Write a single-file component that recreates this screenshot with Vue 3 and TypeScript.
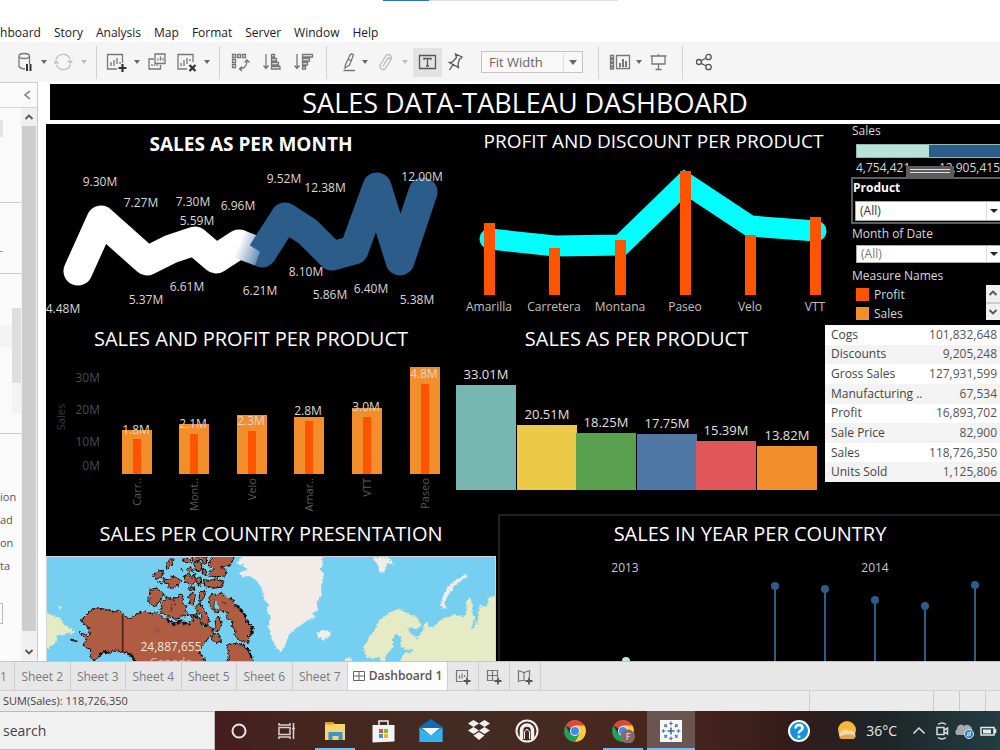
<script setup lang="ts">
import { ref } from 'vue'

interface Point { x: number; y: number }
interface Label extends Point { text: string }
interface ProductBar { name: string; x: number; top: number }
interface DualBar { name: string; x: number; sales: number; profit: number; label: string; labelY: number }
interface ColorBar { label: string; x: number; top: number; color: string }

const menus = ['Dashboard', 'Story', 'Analysis', 'Map', 'Format', 'Server', 'Window', 'Help']
const fit = ref('Fit Width')
const product = ref('(All)')
const month = ref('(All)')

const toPath = (pts: Point[]) => pts.map(p => `${p.x},${p.y}`).join(' ')

const firstYear: Point[] = [
  { x: 32, y: 109 }, { x: 55, y: 58 }, { x: 101, y: 99 }, { x: 125, y: 87 },
  { x: 149, y: 79 }, { x: 170, y: 97 }, { x: 193, y: 82 },
]
const secondYear: Point[] = [
  { x: 216, y: 91 }, { x: 239, y: 55 }, { x: 262, y: 70 }, { x: 286, y: 94 },
  { x: 308, y: 88 }, { x: 331, y: 25 }, { x: 354, y: 99 }, { x: 377, y: 30 },
]
const monthLabels: Label[] = [
  { x: 54, y: 24, text: '9.30M' }, { x: 95, y: 45, text: '7.27M' }, { x: 147, y: 44, text: '7.30M' },
  { x: 151, y: 63, text: '5.59M' }, { x: 192, y: 48, text: '6.96M' }, { x: 238, y: 21, text: '9.52M' },
  { x: 279, y: 30, text: '12.38M' }, { x: 376, y: 19, text: '12.00M' }, { x: 17, y: 151, text: '4.48M' },
  { x: 100, y: 142, text: '5.37M' }, { x: 141, y: 129, text: '6.61M' }, { x: 214, y: 133, text: '6.21M' },
  { x: 260, y: 114, text: '8.10M' }, { x: 284, y: 137, text: '5.86M' }, { x: 325, y: 131, text: '6.40M' },
  { x: 371, y: 142, text: '5.38M' },
]

const discountLine: Point[] = [
  { x: 34, y: 79 }, { x: 99, y: 86 }, { x: 165, y: 85 }, { x: 229, y: 23 }, { x: 294, y: 66 }, { x: 360, y: 71 },
]
const profitBars: ProductBar[] = [
  { name: 'Amarilla', x: 33, top: 63 }, { name: 'Carretera', x: 98, top: 88 }, { name: 'Montana', x: 164, top: 80 },
  { name: 'Paseo', x: 229, top: 11 }, { name: 'Velo', x: 294, top: 75 }, { name: 'VTT', x: 359, top: 57 },
]

const axis: Label[] = [
  { x: 54, y: 28, text: '30M' }, { x: 54, y: 60, text: '20M' }, { x: 54, y: 92, text: '10M' }, { x: 54, y: 116, text: '0M' },
]
const dualBars: DualBar[] = [
  { name: 'Carr..', x: 91, sales: 76, profit: 85, label: '1.8M', labelY: 80 },
  { name: 'Mont..', x: 148, sales: 70, profit: 80, label: '2.1M', labelY: 74 },
  { name: 'Velo', x: 206, sales: 61, profit: 77, label: '2.3M', labelY: 71 },
  { name: 'Amar..', x: 263, sales: 63, profit: 67, label: '2.8M', labelY: 61 },
  { name: 'VTT', x: 321, sales: 54, profit: 63, label: '3.0M', labelY: 57 },
  { name: 'Paseo', x: 379, sales: 13, profit: 30, label: '4.8M', labelY: 24 },
]

const colorBars: ColorBar[] = [
  { label: '33.01M', x: 0, top: 31, color: '#76b7b2' }, { label: '20.51M', x: 61, top: 71, color: '#edc948' },
  { label: '18.25M', x: 120, top: 79, color: '#59a14f' }, { label: '17.75M', x: 181, top: 80, color: '#4e79a7' },
  { label: '15.39M', x: 240, top: 87, color: '#e15759' }, { label: '13.82M', x: 301, top: 92, color: '#f28e2b' },
]

const totals: [string, string][] = [
  ['Cogs', '101,832,648'], ['Discounts', '9,205,248'], ['Gross Sales', '127,931,599'], ['Manufacturing ..', '67,534'],
  ['Profit', '16,893,702'], ['Sale Price', '82,900'], ['Sales', '118,726,350'], ['Units Sold', '1,125,806'],
]

const lollipops: Point[] = [
  { x: 275, y: 31 }, { x: 325, y: 34 }, { x: 375, y: 45 }, { x: 425, y: 51 }, { x: 475, y: 30 },
]
const sheets = ['Sheet 2', 'Sheet 3', 'Sheet 4', 'Sheet 5', 'Sheet 6', 'Sheet 7']
const burst = [0, 45, 90, 135, 180, 225, 270, 315]
</script>

<template>
  <div class="app">
    <div class="progress"><i></i></div>
    <nav class="menu">
      <button v-for="m in menus" :key="m" type="button">{{ m }}</button>
    </nav>

    <div class="toolbar">
      <div class="group lead">
        <button type="button" class="ic" aria-label="Pause auto updates">
          <svg viewBox="0 0 24 24"><path d="M7 6v10.500q2 2.500 6 2.500M17.500 6v8M7 6q0-2.500 5.200-2.500t5.200 2.500q0 2.500-5.200 2.500T7 6z" /><path class="solid" d="M14 14h2v7h-2zM17.500 14h2v7h-2z" /></svg>
        </button>
        <button type="button" class="caret" aria-label="Pause options"></button>
        <button type="button" class="ic dim" aria-label="Refresh">
          <svg viewBox="0 0 24 24"><path d="M4 9.500A7.500 7.500 0 0 1 18 9M18.500 14.500A7.500 7.500 0 0 1 4.500 15" /><path class="fill" d="M15 10.500h6L18.500 14zM1.500 13.500h6L4 10z" /></svg>
        </button>
        <button type="button" class="caret dim" aria-label="Refresh options"></button>
      </div>
      <div class="group">
        <button type="button" class="ic" aria-label="New worksheet">
          <svg viewBox="0 0 24 24"><path d="M12 19H2.500V4.500h15V13M6 12v4M9 10v6M12 8v6M15 12v2" /><path class="dark" d="M17.500 14v8M13.500 18h8" /></svg>
        </button>
        <button type="button" class="caret" aria-label="New options"></button>
        <button type="button" class="ic" aria-label="Duplicate">
          <svg viewBox="0 0 24 24"><path d="M10 4h10v9.500H10zM9 9H4v10h11.500v-4M13 10.500v-2M15.500 10.500v-4M18 10.500V8M7 16v-2M9.500 16v-1.500M12 16v-1.500" /></svg>
        </button>
        <button type="button" class="ic step" aria-label="Clear sheet">
          <svg viewBox="0 0 24 24"><path d="M12 19H3V4.500h15V12M6 13v3M9 10v6M12 8v6M15 9v2" /><path class="dark" d="M14.500 15l6 6M20.500 15l-6 6" /></svg>
        </button>
        <button type="button" class="caret" aria-label="Clear options"></button>
      </div>
      <div class="group wide">
        <button type="button" class="ic" aria-label="Swap rows and columns">
          <svg viewBox="0 0 24 24"><path d="M4.500 4.500h3v3h-3zM9.500 4.500h3v3h-3zM14.500 4.500h3v3h-3zM4.500 9.500h3v3h-3zM4.500 14.500h3v3h-3zM19 10.500q0 7.500-7 8.500M16.500 12.500L19 10l2.500 2.500M14 16.500L11.500 19l2.500 2" /></svg>
        </button>
        <button type="button" class="ic" aria-label="Sort ascending">
          <svg viewBox="0 0 24 24"><path d="M6 4v14M3.500 15.500L6 18.500l2.500-3M11.500 4.500h3V7h-3zM11.500 8.500h5V11h-5zM11.500 12.500h7V15h-7zM11.500 16.500h8.500V19h-8.500z" /></svg>
        </button>
        <button type="button" class="ic" aria-label="Sort descending">
          <svg viewBox="0 0 24 24"><path d="M5 4v14M2.500 15.500L5 18.500l2.500-3M10.500 4.500h10V7h-10zM10.500 8.500h7V11h-7zM10.500 12.500h5V15h-5zM10.500 16.500h3V19h-3z" /></svg>
        </button>
      </div>
      <div class="group marks">
        <button type="button" class="ic" aria-label="Highlight">
          <svg viewBox="0 0 24 24"><path d="M12.500 14.500L17 5q1.500-2 3.500 0L16.500 15l-4.500 3zM15 9l4 2M10.500 20.500H22" /></svg>
        </button>
        <button type="button" class="caret" aria-label="Highlight options"></button>
        <button type="button" class="ic dim" aria-label="Group members">
          <svg viewBox="0 0 24 24"><path d="M10 16.500l4.500-8q1.500-1.500 2.500 0t0 2.500l-4.500 7.500q-2.500 2-4.500 0t-.5-4l5.500-9q2.500-2 4.500 0t0 4.500l-3 5" /></svg>
        </button>
        <button type="button" class="caret dim" aria-label="Group options"></button>
        <button type="button" class="ic active" aria-label="Show mark labels">
          <svg viewBox="0 0 24 24"><path class="dk" d="M3.500 5.500h16v13h-16zM8 10V8.500h7V10M11.500 8.500v7.500M10 16h3" /></svg>
        </button>
        <button type="button" class="ic" aria-label="Fix axes">
          <svg viewBox="0 0 24 24"><path class="dk" d="M11.500 4l6.500 3-1 1.500-1.500.5-1.500 5 .5 3.500L5.500 12.500l3-.5 4-4.500zM9 14.500L5.500 20" /></svg>
        </button>
        <label class="fit">
          <select v-model="fit" aria-label="Fit"><option>Fit Width</option><option>Standard</option></select>
          <i></i>
        </label>
      </div>
      <div class="group show">
        <button type="button" class="ic" aria-label="Show cards">
          <svg viewBox="0 0 24 24"><path d="M2.500 5.500h3V8h-3zM2.500 9.500h3V12h-3zM2.500 13.500h3V16h-3zM2.500 17h3v2h-3zM8.500 5.500h13v13h-13z" /><path d="M12 17v-4M15 17V9M18 17v-6" stroke-width="2" /></svg>
        </button>
        <button type="button" class="caret" aria-label="Card options"></button>
        <button type="button" class="ic" aria-label="Presentation mode">
          <svg viewBox="0 0 24 24"><path d="M4.500 6h16M6 6v8h13V6M12.500 4v2M12.500 14v5.500M9.500 19.500h6" /></svg>
        </button>
      </div>
      <div class="group last">
        <button type="button" class="ic" aria-label="Share">
          <svg viewBox="0 0 24 24"><path class="dk" d="M8.500 10.800l6-2.800M8.500 13.200l6 2.800" /><circle class="dk" cx="7" cy="12" r="2.500" /><circle class="dk" cx="16.500" cy="7" r="2.700" /><circle class="dk" cx="16.500" cy="17" r="2.700" /></svg>
        </button>
      </div>
    </div>

    <div class="work">
      <aside class="pane">
        <header><button type="button" aria-label="Collapse"><svg viewBox="0 0 8 10"><path d="M7 1L2 5l5 4" /></svg></button></header>
        <div class="pane-body">
          <div class="pane-items">
            <section class="s1"><i></i></section>
            <section class="s2"><i></i></section>
            <section class="s3"><div class="row"></div><div class="mini"><i></i></div></section>
            <section class="s4"><span>ion</span><span>ad</span><span>on</span><span>ta</span><i></i></section>
          </div>
          <div class="scroll">
            <svg viewBox="0 0 10 8"><path d="M1.500 6L5 2.500 8.500 6" /></svg>
            <i></i>
            <svg viewBox="0 0 10 8"><path d="M1.500 2L5 5.500 8.500 2" /></svg>
          </div>
        </div>
      </aside>

      <main class="dash">
        <h1>SALES DATA-TABLEAU DASHBOARD</h1>
        <div class="board">
          <div class="row-top">
            <section class="month">
              <h2>SALES AS PER MONTH</h2>
              <svg class="chart" viewBox="0 0 410 162" preserveAspectRatio="xMidYMin meet">
                <defs>
                  <linearGradient id="fade" gradientUnits="userSpaceOnUse" x1="193" y1="82" x2="216" y2="91">
                    <stop offset="0" stop-color="#fff" /><stop offset="1" stop-color="#5f85b0" />
                  </linearGradient>
                </defs>
                <g fill="none" stroke-width="29" stroke-linejoin="round">
                  <polyline :points="toPath(firstYear)" stroke="#fff" stroke-linecap="round" />
                  <circle cx="216" cy="91" r="14.500" fill="#2b5c8a" stroke="none" />
                  <path d="M193 82L214 90" stroke="url(#fade)" />
                  <polyline :points="toPath(secondYear)" stroke="#2b5c8a" />
                  <circle cx="377" cy="30" r="14.500" fill="#2b5c8a" stroke="none" />
                </g>
                <text v-for="l in monthLabels" :key="l.text" class="val mid" :x="l.x" :y="l.y">{{ l.text }}</text>
              </svg>
            </section>
            <section class="profit">
              <h2>PROFIT AND DISCOUNT PER PRODUCT</h2>
              <svg class="chart" viewBox="0 0 395 164" preserveAspectRatio="xMidYMin meet">
                <polyline :points="toPath(discountLine)" fill="none" stroke="#0ff" stroke-width="21" stroke-linecap="round" />
                <g v-for="b in profitBars" :key="b.name">
                  <rect :x="b.x - 5" :y="b.top" width="11" :height="135 - b.top" fill="#ff5500" />
                  <text class="cat mid" :x="b.x" y="151">{{ b.name }}</text>
                </g>
              </svg>
            </section>
            <section class="filters">
              <div class="flabel first">Sales</div>
              <div class="ramp"><i></i><i></i></div>
              <div class="range"><span>4,754,421</span><span>12,905,415</span><b class="grip"></b></div>
              <div class="picked">
                <label for="product">Product</label>
                <div class="pick"><select id="product" v-model="product"><option>(All)</option></select><i></i></div>
              </div>
              <div class="plain">
                <label class="flabel" for="month">Month of Date</label>
                <div class="pick soft"><select id="month" v-model="month"><option>(All)</option></select><i></i></div>
              </div>
              <div class="flabel names">Measure Names</div>
              <div class="legend">
                <ul><li><i class="p"></i>Profit</li><li><i class="s"></i>Sales</li></ul>
                <div class="spin">
                  <button type="button" aria-label="Scroll up"><svg viewBox="0 0 10 8"><path d="M1.500 6L5 2.500 8.500 6" /></svg></button>
                  <button type="button" aria-label="Scroll down"><svg viewBox="0 0 10 8"><path d="M1.500 2L5 5.500 8.500 2" /></svg></button>
                </div>
              </div>
            </section>
          </div>

          <div class="row-mid">
            <section class="dual">
              <h2>SALES AND PROFIT PER PRODUCT</h2>
              <svg class="chart" viewBox="0 0 410 159" preserveAspectRatio="xMidYMin meet">
                <text v-for="a in axis" :key="a.text" class="axis" :x="a.x" :y="a.y">{{ a.text }}</text>
                <text class="axis-name mid" transform="translate(19 63) rotate(-90)">Sales</text>
                <g v-for="b in dualBars" :key="b.name">
                  <rect :x="b.x - 15" :y="b.sales" width="30" :height="120 - b.sales" fill="#f28e2b" />
                  <rect :x="b.x - 4" :y="b.profit" width="8" :height="120 - b.profit" fill="#ff5500" />
                  <text class="val mid" :x="b.x - 1" :y="b.labelY">{{ b.label }}</text>
                  <text class="side" :transform="`translate(${b.x + 4} 124) rotate(-90)`">{{ b.name }}</text>
                </g>
              </svg>
            </section>
            <section class="single">
              <h2>SALES AS PER PRODUCT</h2>
              <svg class="chart" viewBox="0 0 361 159" preserveAspectRatio="xMidYMin meet">
                <g v-for="b in colorBars" :key="b.label">
                  <rect :x="b.x" :y="b.top" width="60" :height="136 - b.top" :fill="b.color" />
                  <text class="big mid" :x="b.x + 30" :y="b.top - 6">{{ b.label }}</text>
                </g>
              </svg>
            </section>
            <section class="totals">
              <table><tbody>
                <tr v-for="t in totals" :key="t[0]"><th scope="row">{{ t[0] }}</th><td>{{ t[1] }}</td></tr>
              </tbody></table>
            </section>
          </div>

          <div class="row-low">
            <section class="country">
              <h2>SALES PER COUNTRY PRESENTATION</h2>
              <svg class="map" viewBox="18 141 1350 312" preserveAspectRatio="xMidYMin slice">
                <defs>
                  <filter id="coast" x="-5%" y="-5%" width="110%" height="110%">
                    <feTurbulence type="fractalNoise" baseFrequency="0.15" numOctaves="2" seed="4" />
                    <feDisplacementMap in="SourceGraphic" scale="12" xChannelSelector="R" yChannelSelector="G" />
                  </filter>
                </defs>
                <rect x="18" y="141" width="1350" height="312" fill="#75cff0" />
                <g filter="url(#coast)">
                  <path fill="#f1ece8" d="M590 160L605 143 615 130H845L848 165 840 180 852 192 843 230 845 255 830 275 833 300 815 312 828 320 800 333 770 355 748 372 735 405 724 427 710 415 695 388 685 350 692 320 680 300 688 285 672 270 665 235 650 212 628 198 605 202 598 185 622 178 608 165zM1000 146L1020 138 1050 146 1062 165 1045 160 1038 170 1032 190 1018 185 1014 165zM1202 280L1210 255 1222 232 1245 212 1280 190 1282 200 1245 225 1228 250 1215 275 1220 295 1205 292z" />
                  <path fill="#f1ece8" d="M828 368L850 360 872 366 872 378 850 390 836 382z" />
                  <path fill="#e5ebc4" d="M10 306L35 315 60 325 75 345 102 362 98 372 80 370 70 378 52 376 45 400 25 415H10zM52 288l16 4-8 5z" />
                  <path fill="#e5ebc4" d="M970 410L985 385 1005 360 1015 335 1040 315 1062 300 1085 298 1105 312 1130 322 1145 345 1130 358 1105 350 1110 370 1130 380 1150 360 1150 345 1162 335 1165 350 1180 350 1210 325 1230 320 1245 312 1270 322 1280 305 1278 275 1290 262 1298 280 1295 310 1305 320 1312 345 1318 300 1320 285 1340 290 1345 265 1380 250V470H1075L1090 430 1115 425 1120 418 1095 420 1082 410 1085 385 1068 372 1055 390 1062 410 1045 425 1035 453 1025 458 1018 440 998 447 978 440zM918 445l15-4 3 14h-22z" />
                  <path fill="none" stroke="#75cff0" stroke-width="7" d="M1298 355L1305 325M1150 350L1130 385" />
                  <g fill="#b05c42" stroke="#120c0a" stroke-width="3">
                    <path d="M124 330L150 302 172 293 205 300 222 306 235 300 248 314 270 326 290 312 315 302 335 312 350 308 368 322 385 325 400 340 420 330 440 340 462 330 450 315 470 312 476 330 488 350 505 345 518 355 520 375 505 385 495 398 482 410 478 430 492 445 500 465H295L280 440 262 428 240 425 225 420 205 430 190 422 178 440 162 453 150 440 152 420 128 405 140 388 118 368 150 378 145 350 135 345z" />
                    <path d="M330 238L350 235 372 252 362 270 345 290 326 278zM362 280L380 268 375 258 395 268 415 262 420 252 430 256 425 280 440 288 436 300 446 316 425 318 410 328 385 320 358 305 366 295zM445 262L458 246 466 255 460 285 445 282 452 272zM478 245L498 243 490 268 478 275zM468 290L480 278 492 300 508 330 498 350 480 335 486 315 472 310z" />
                    <path d="M505 265L518 250 530 256 545 248 560 262 575 265 585 285 600 295 612 312 618 330 632 345 640 370 625 378 628 400 600 392 580 372 590 365 575 348 578 335 560 325 562 308 540 300 530 310 512 290zM515 360L528 350 525 330 535 318 545 345 535 365zM520 372l15-2 10 22-14 6-18-8zM560 405L590 400 612 410 630 430 645 465H560L568 440z" />
                    <path d="M338 200L352 184 370 180 368 196 350 208zM368 205L385 210 395 198 410 202 425 214 415 225 400 235 385 232 388 222 370 218zM378 160L392 146 402 148 396 165 380 178zM425 148L445 145 455 155 440 158zM432 200L448 190 455 205 462 192 468 215 455 225 436 215zM462 160L478 150 486 170 478 185 466 180zM512 148L530 135H585L572 165 545 172 560 180 555 198 530 200 505 198 512 182 525 175 505 168zM490 208L510 212 530 206 552 214 545 232 520 234 495 230zM470 205l12-4 4 20-14 4zM455 143l25-3-4 12-16 4zM484 143l14-3 2 20-10 4zM487 176l14 6-4 14-10-4zM440 178l14-8 4 12-12 4zM445 232l14-4 6 10-16 4zM422 172l6 10M352 214l20 10M462 188l6 8M478 225l8 8" />
                    <path d="M92 388l18 6M178 438q12-18 28-10M262 432q18 4 24 24" stroke-width="6" fill="none" />
                    <path d="M586 285L604 300 622 332 638 355 634 370M606 400L628 424 636 445M380 328L400 345 420 336 450 344M460 318L482 326" fill="none" stroke-width="7" stroke-dasharray="14 5" />
                  </g>
                  <path d="M392 282l4 24M525 268l-4 24q12 10 20 8M545 275l15 8M400 265l6 20" fill="#75cff0" stroke="#120c0a" stroke-width="2" />
                </g>
                <path d="M248 313V427" stroke="#47251c" stroke-width="5" />
                <path d="M340 352l20 14M338 368l22-12M350 348v22" stroke="#92554a" stroke-width="3" />
                <text class="map-text" x="393" y="424">24,887,655</text>
                <text class="map-text place" x="393" y="472">Canada</text>
              </svg>
            </section>
            <section class="year">
              <h2>SALES IN YEAR PER COUNTRY</h2>
              <svg class="chart" viewBox="0 0 500 106" preserveAspectRatio="xMidYMin slice">
                <text class="yr mid" x="125" y="17">2013</text>
                <text class="yr mid" x="375" y="17">2014</text>
                <circle cx="126" cy="106" r="4" fill="#bce4d8" />
                <g v-for="p in lollipops" :key="p.x" fill="#2b5c8a">
                  <rect :x="p.x - 1" :y="p.y" width="2" :height="106 - p.y" />
                  <circle :cx="p.x" :cy="p.y" r="4" />
                </g>
              </svg>
            </section>
          </div>
        </div>
      </main>
    </div>

    <div class="tabs">
      <button type="button" class="first">1</button>
      <div class="sheets"><button v-for="s in sheets" :key="s" type="button">{{ s }}</button></div>
      <button type="button" class="current">
        <svg viewBox="0 0 12 12"><path d="M.5 1.500h11v9H.5zM6 1.500v9M.5 6h11" /></svg>Dashboard 1
      </button>
      <button type="button" class="new" aria-label="New worksheet"><svg viewBox="0 0 16 16"><path d="M8 12.500H1.500v-11h11V8M4.500 9.500v-3M7 9.500v-5M9.500 8V6" /><path class="plus" d="M12 8.500v7M8.500 12h7" /></svg></button>
      <button type="button" class="new" aria-label="New dashboard"><svg viewBox="0 0 16 16"><path d="M8 11.500H1.500v-10h10V8M6.500 1.500v10M1.500 6.500h10" /><path class="plus" d="M12 8.500v7M8.500 12h7" /></svg></button>
      <button type="button" class="new" aria-label="New story"><svg viewBox="0 0 16 16"><path d="M8 11.500H4.500l-3 1v-11l4 1.500L7 4l1.500-1 4-1.500V8M7 4v7.500" /><path class="plus" d="M12 8.500v7M8.500 12h7" /></svg></button>
    </div>

    <div class="status">
      <span>SUM(Sales): 118,726,350</span>
      <i class="c1"></i><i class="c2"></i><i class="c3"></i><i class="c4"></i>
    </div>

    <footer class="taskbar">
      <input type="text" value="search" aria-label="Search" />
      <div class="apps">
        <button type="button" aria-label="Cortana"><svg viewBox="0 0 24 24"><circle cx="12" cy="12" r="6.500" fill="none" stroke="#e8e4e4" stroke-width="2" /></svg></button>
        <button type="button" aria-label="Task view"><svg viewBox="0 0 24 24"><path d="M4 4v2h11V4M4 20v-2h11v2M4 8.500h11v7H4zM18.500 4v16M17 9.500h3" fill="none" stroke="#d8d2d0" stroke-width="1.500" /></svg></button>
        <button type="button" class="open" aria-label="File Explorer"><svg viewBox="0 0 24 24"><path d="M2 3h8l1.500 2H22v16H2z" fill="#f9d56b" /><path d="M2 3h8l1 2.500H2z" fill="#e49b1c" /><path d="M5.500 21v-8h14v8h-4v-4h-6v4z" fill="#3d93cf" /></svg></button>
        <button type="button" aria-label="Store"><svg viewBox="0 0 24 24"><path d="M8 7V2h9v5" fill="none" stroke="#eee" stroke-width="1.500" /><path d="M1.500 6h22v16.500l-22 1z" fill="#f3f3f3" /><path d="M8 10h4v4H8z" fill="#e0532c" /><path d="M13 10h4v4h-4z" fill="#80b940" /><path d="M8 15h4v4H8z" fill="#2f9fdc" /><path d="M13 15h4v4h-4z" fill="#efb529" /></svg></button>
        <button type="button" aria-label="Mail"><svg viewBox="0 0 24 24"><path d="M.5 8L12 0l11.500 8v15H.5z" fill="#136bb5" /><path d="M.5 8.500L12 16.500l11.500-8V23H.5z" fill="#35b1ee" /><path d="M3 9h18l-9 7.500z" fill="#f4f7fa" /></svg></button>
        <button type="button" aria-label="Dropbox"><svg viewBox="0 0 24 24"><path d="M6.500 1L12 4.500 6.500 8 1 4.500zM17.500 1L23 4.500 17.500 8 12 4.500zM6.500 8L12 11.500 6.500 15 1 11.500zM17.500 8L23 11.500 17.500 15 12 11.500zM12 13l5.500 3.500L12 21l-5.500-4.500z" fill="#f2efee" /></svg></button>
        <button type="button" aria-label="VPN"><svg viewBox="0 0 24 24"><circle cx="12" cy="12" r="10.500" fill="none" stroke="#f2efee" stroke-width="2" /><path d="M6.500 20V11.500a5.500 5.500 0 0 1 11 0V20" fill="none" stroke="#f2efee" stroke-width="3.500" /><path d="M9.500 20v-7l2.500-3 2.500 3v7" fill="none" stroke="#f2efee" /></svg></button>
        <button type="button" aria-label="Chrome"><svg viewBox="0 0 24 24"><path d="M12 12L2.500 6.500A11 11 0 0 1 21.500 6.500z" fill="#dc4a3e" /><path d="M12 12V6.500h9.500A11 11 0 0 1 12 23z" fill="#fccb42" /><path d="M12 12l4.800 2.800L12 23A11 11 0 0 1 2.500 6.500L7.200 14.800z" fill="#23a05a" /><circle cx="12" cy="12" r="5" fill="#f5f5f5" /><circle cx="12" cy="12" r="4" fill="#4b86ea" /></svg></button>
        <button type="button" class="open" aria-label="Chrome, profile F"><svg viewBox="0 0 24 24"><path d="M12 12L2.500 6.500A11 11 0 0 1 21.500 6.500z" fill="#dc4a3e" /><path d="M12 12V6.500h9.500A11 11 0 0 1 12 23z" fill="#fccb42" /><path d="M12 12l4.800 2.800L12 23A11 11 0 0 1 2.500 6.500L7.200 14.800z" fill="#23a05a" /><circle cx="12" cy="12" r="5" fill="#f5f5f5" /><circle cx="12" cy="12" r="4" fill="#4b86ea" /><circle cx="17" cy="17.500" r="7" fill="#846a61" /><text x="17" y="21" text-anchor="middle" font-size="9" fill="#eee">F</text></svg></button>
        <button type="button" class="open front" aria-label="Tableau"><svg viewBox="0 0 24 24"><path d="M1 1h22v22H1z" fill="#f6f8fa" /><path d="M12 8.500v7M8.500 12h7" stroke="#2d6e9e" stroke-width="1.500" /><g v-for="a in burst" :key="a" :transform="`rotate(${a} 12 12)`"><path d="M12 2.500v4M10.200 4.500h3.600" stroke="#48799f" stroke-width="1.200" /></g></svg></button>
      </div>
      <div class="tray">
        <button type="button" class="help" aria-label="Help"><svg viewBox="0 0 24 24"><circle cx="12" cy="12" r="10" fill="#1592db" stroke="#fff" stroke-width="2" /><path d="M8.500 9.500q0-3.500 3.500-3.500t3.500 3q0 1.500-2 2.800T12 14.500M12 16.500v2.500" fill="none" stroke="#fff" stroke-width="2.500" /></svg></button>
        <button type="button" class="weather"><svg viewBox="0 0 24 24"><circle cx="12" cy="11" r="9" fill="#f6b83c" /><path d="M5 18a3 3 0 0 1 1-5 5 5 0 0 1 8-1 4 4 0 0 1 6 2.500q1.500 4-2 4.500H6z" fill="#edd9ac" /><path d="M4 18q8-5 17-1l-2 3H6z" fill="#e2a750" /></svg>36°C</button>
        <button type="button" aria-label="Hidden icons"><svg viewBox="0 0 24 24"><path d="M6.500 14.500L12 9l5.500 5.500" fill="none" stroke="#ddd" stroke-width="1.500" /></svg></button>
        <button type="button" aria-label="Meet now"><svg viewBox="0 0 24 24"><path d="M7 8.500h7v7H7zM14 11l3.500-2v6L14 13M8 5.500q4-3 8 0M8 18.500q4 3 8 0" fill="none" stroke="#d5dadb" stroke-width="1.500" /></svg></button>
        <button type="button" aria-label="Cloud sync"><svg viewBox="0 0 24 24"><path d="M4 16a3.500 3.500 0 0 1 0-6 4 4 0 0 1 7-3 5 5 0 0 1 8 5v4z" fill="#a6aaab" /><circle cx="16" cy="15" r="4.500" fill="#2b7dbc" stroke="#dcebf4" /><path d="M14 14h4l-1-1.500M18 16h-4l1 1.500" fill="none" stroke="#fff" /></svg></button>
        <button type="button" aria-label="Battery"><svg viewBox="0 0 24 24"><path d="M5 8.500h13v7.500H5zM18 10.500h1.500v3H18" fill="none" stroke="#e5e9ea" stroke-width="1.500" /><path d="M7 10.500h8v4H7z" fill="#e5e9ea" /></svg></button>
      </div>
    </footer>
  </div>
</template>

<style>
html, body { margin: 0; height: 100%; }
body { overflow: hidden; }
</style>

<style scoped>
.app { height: 100vh; display: flex; flex-direction: column; background: #fff; color: #333; font-family: "Open Sans", "Noto Sans", sans-serif; font-size: 12px; line-height: 16px; overflow: hidden; }
button { border: 0; padding: 0; margin: 0; background: none; font: inherit; color: inherit; white-space: nowrap; }
h1, h2 { margin: 0; font-weight: 400; color: #fff; text-align: center; white-space: nowrap; }
i { font-style: normal; }

.progress { width: 235px; height: 1px; margin-left: 383px; background: #ddd; display: flex; flex: none; }
.progress i { width: 46px; background: #2a72b0; }
.menu { display: flex; gap: 13px; height: 41px; flex: none; align-items: flex-end; box-sizing: border-box; margin-left: -21px; color: #1c1824; }
.menu button { line-height: 18px; }

.toolbar { display: flex; height: 40px; flex: none; background: #f5f5f5; align-items: center; }
.group { display: flex; align-items: center; gap: 2px; height: 33px; padding: 0 6px 0 8px; border-right: 1px solid #d2d2d2; }
.group.lead { padding-left: 12px; }
.group.wide { gap: 8px; padding-right: 10px; }
.group.marks { padding: 0 15px 0 6px; }
.group.show { gap: 1px; padding: 0 12px 0 9px; }
.group.last { border: 0; padding-left: 9px; }
.ic { width: 24px; height: 24px; }
.ic svg { display: block; width: 24px; height: 24px; fill: none; stroke: #777; stroke-width: 1.3; }
.ic.step { margin-left: 4px; }
.ic.dim svg { stroke: #bdbdbd; }
.ic.active { width: 29px; height: 29px; background: #e3e3e3; display: flex; align-items: center; justify-content: center; }
.ic .dk { stroke: #555; }
.ic .dark { stroke: #333; stroke-width: 2.2; }
.ic .solid { fill: #333; stroke: none; }
.ic .fill { fill: #bdbdbd; stroke: none; }
.caret { width: 12px; height: 24px; display: flex; align-items: center; justify-content: center; }
.caret::before { content: ""; border: 3px solid transparent; border-top: 4px solid #666; border-bottom: 0; }
.caret.dim::before { border-top-color: #bbb; }
.fit { display: flex; width: 100px; height: 20px; margin-left: 11px; border: 1px solid #c2c2c2; background: #f8f8f8; }
.fit select { flex: 1; min-width: 0; appearance: none; border: 0; background: none; padding: 0 0 0 7px; font: inherit; font-size: 13px; color: #666; }
.fit i { width: 18px; border-left: 1px solid #e2e2e2; display: flex; align-items: center; justify-content: center; }
.fit i::before { content: ""; border: 4px solid transparent; border-top: 5px solid #666; border-bottom: 0; }

.work { flex: 1; min-height: 0; display: flex; }
.pane { width: 37px; flex: none; border-right: 1px solid #ccc; border-top: 1px solid #ccc; background: #fafafa; display: flex; flex-direction: column; }
.pane header { height: 24px; flex: none; border-bottom: 1px solid #d4d4d4; display: flex; justify-content: flex-end; align-items: center; padding-right: 6px; }
.pane header svg { width: 8px; height: 10px; display: block; fill: none; stroke: #777; stroke-width: 1.5; }
.pane-body { flex: 1; min-height: 0; display: flex; }
.pane-items { flex: 1; display: flex; flex-direction: column; overflow: hidden; }
.pane-items section { border-bottom: 1px solid #ccc; box-sizing: border-box; flex: none; }
.s1 { height: 95px; padding-top: 12px; }
.s1 i { display: block; width: 3px; height: 17px; background: #e3e3e3; }
.s2 { height: 71px; padding-top: 38px; }
.s2 i { display: block; width: 3px; height: 10px; border-bottom: 1px solid #999; }
.s3 { height: 160px; display: flex; padding: 34px 0 19px; }
.s3 .row { flex: 1; height: 21px; margin-top: 18px; background: #f3f3f3; }
.s3 .mini { width: 9px; background: #f3f3f3; }
.s3 .mini i { display: block; height: 75px; background: #dedede; }
.pane-items .s4 { border: 0; padding-top: 51px; display: flex; flex-direction: column; font-size: 11px; color: #555; overflow: hidden; }
.s4 span { line-height: 23px; padding-right: 5px; text-align: left; }
.s4 i { width: 3px; height: 21px; margin-top: 26px; border: 1px solid #bbb; border-left: 0; box-sizing: border-box; }
.scroll { width: 16px; background: #f0f0f0; display: flex; flex-direction: column; align-items: center; }
.scroll svg { width: 10px; height: 8px; margin: 5px 0; fill: none; stroke: #555; stroke-width: 1.8; }
.scroll i { width: 14px; flex: 1; background: #cdcdcd; margin-bottom: 12px; }

.dash { flex: 1; min-width: 0; display: flex; flex-direction: column; padding: 2px 0 0 8px; overflow: hidden; }
h1 { height: 36px; flex: none; margin-left: 4px; background: #000; font-size: 27px; line-height: 38px; }
.board { flex: 1; min-height: 0; margin-top: 4px; background: #000; display: flex; flex-direction: column; }
h2 { font-size: 20px; line-height: 29px; height: 30px; }
.row-top { display: flex; height: 200px; flex: none; }
.row-mid { display: flex; height: 189px; flex: none; }
.row-low { display: flex; flex: 1; min-height: 0; }
.chart { display: block; width: 100%; overflow: hidden; }
.month { flex: 410; min-width: 0; }
.month h2 { font-size: 19px; font-weight: 700; height: 38px; line-height: 40px; }
.month .chart { height: 162px; }
.profit { flex: 395; min-width: 0; }
.profit h2 { font-size: 19px; height: 36px; line-height: 35px; }
.profit .chart { height: 164px; }
.mid { text-anchor: middle; }
.val { font-size: 12px; fill: #ddd8d0; }
.cat { font-size: 12px; fill: #c4c0b8; }
.big { font-size: 13px; fill: #e2e0dc; }
.axis { font-size: 12px; fill: #4c4c4c; text-anchor: end; }
.axis-name { font-size: 11px; fill: #3a3a3a; }
.side { font-size: 11px; fill: #5a5a5a; text-anchor: end; }
.yr { font-size: 12px; fill: #c8c8c4; }

.filters { width: 149px; flex: none; color: #d8d8d8; overflow: hidden; }
.flabel { display: block; height: 18px; line-height: 16px; padding-left: 1px; }
.filters .first { height: 20px; line-height: 14px; }
.ramp { margin-left: 5px; height: 12px; display: flex; border: 1px solid #8fb8b0; border-right: 0; }
.ramp i { flex: 1; background: #b9e3d6; }
.ramp i + i { background: #2b5c8a; }
.range { position: relative; display: flex; justify-content: space-between; margin-left: 5px; height: 19px; line-height: 20px; }
.grip { position: absolute; left: 50px; top: 8px; width: 40px; height: 4px; background: #5c5c5c; border: 4px solid #5c5c5c; border-top-width: 3px; }
.grip::before { content: ""; display: block; height: 2px; border-top: 1px solid #ddd; border-bottom: 1px solid #ddd; }
.picked { border: 2px solid #5e5e5e; border-right: 0; height: 43px; color: #fff; }
.picked label { display: block; height: 22px; line-height: 18px; font-weight: 700; }
.picked .pick { margin-left: 2px; }
.plain { margin-top: 3px; }
.plain .flabel { line-height: 14px; }
.plain .pick { margin-left: 5px; }
.pick { display: flex; height: 18px; background: #fff; border: 1px solid #aaa; border-right: 0; box-sizing: border-box; }
.picked .pick { height: 20px; }
.pick select { flex: 1; min-width: 0; border: 0; padding: 0 0 0 4px; appearance: none; background: none; font: inherit; color: #333; line-height: 16px; }
.pick.soft select { color: #777; }
.pick i { width: 14px; border-left: 1px solid #ddd; display: flex; align-items: center; justify-content: center; box-sizing: border-box; flex: none; }
.pick i::before { content: ""; border: 4px solid transparent; border-top: 4px solid #222; border-bottom: 0; }
.filters .names { margin-top: 5px; height: 17px; }
.legend { display: flex; justify-content: space-between; }
.legend ul { list-style: none; margin: 0; padding: 0 0 0 5px; }
.legend li { display: flex; align-items: center; gap: 5px; height: 19px; }
.legend li i { width: 13px; height: 13px; }
.p { background: #ff5500; }
.s { background: #f28e2b; }
.spin { width: 14px; display: flex; flex-direction: column; gap: 2px; background: #ccc; height: 35px; }
.spin button { flex: 1; background: #f0f0f0; }
.spin svg { width: 10px; height: 8px; display: block; margin: auto; fill: none; stroke: #555; stroke-width: 1.8; }

.dual { flex: 410; min-width: 0; }
.single { flex: 361; min-width: 0; margin-right: 8px; }
.dual .chart, .single .chart { height: 159px; }
.totals { width: 175px; flex: none; }
table { width: 100%; height: 157px; border-collapse: collapse; background: #fff; color: #555; margin-top: 1px; }
tr:nth-child(even) { background: #f3f3f3; }
th, td { padding: 0; line-height: 16px; font-weight: 400; }
th { text-align: left; padding-left: 6px; color: #444; }
td { text-align: right; padding-right: 3px; }

.country { flex: 450; min-width: 0; display: flex; flex-direction: column; }
.country h2 { height: 43px; line-height: 41px; flex: none; }
.map { flex: 1; min-height: 0; width: 100%; display: block; border: 1px solid #cfd8da; border-bottom: 0; box-sizing: border-box; }
.map-text { font-size: 36px; fill: #eee5df; text-anchor: middle; }
.place { fill: #d9bfb4; }
.year { flex: 500; min-width: 0; margin: 1px 0 0 2px; border: 2px solid #222; border-right: 0; border-bottom: 0; }
.year h2 { height: 39px; line-height: 35px; }
.year .chart { height: 106px; }

.tabs { display: flex; height: 30px; flex: none; background: #e7e7e7; border-top: 1px solid #c6c6c6; border-bottom: 1px solid #d2d2d2; box-sizing: border-box; color: #7a7a7a; }
.tabs button { border-right: 1px solid #cfcfcf; box-sizing: border-box; padding-top: 1px; }
.tabs .first { width: 15px; padding-right: 8px; }
.sheets { display: flex; width: 333px; }
.sheets button { flex: 1; }
.tabs .current { width: 100px; background: #fdfdfd; color: #555; font-weight: 600; display: flex; align-items: center; justify-content: center; gap: 4px; padding: 0; }
.current svg { width: 12px; height: 12px; fill: none; stroke: #666; }
.tabs .new { width: 31px; display: flex; align-items: center; justify-content: center; }
.new svg { width: 16px; height: 16px; fill: none; stroke: #777; stroke-width: 1.2; }
.new .plus { stroke: #555; stroke-width: 1.8; }

.status { display: flex; height: 20px; flex: none; background: #ebebeb; font-size: 11px; line-height: 20px; padding-left: 3px; color: #444; }
.status span { flex: 1; }
.status i { border-left: 1px solid #cacaca; box-sizing: border-box; }
.c1 { width: 124px; }
.c2, .c3 { width: 26px; }
.c4 { width: 15px; }

.taskbar { display: flex; height: 39px; flex: none; background: linear-gradient(90deg, #451c20 21%, #45261f 30%, #432c23 48%, #48251d 68%, #321b1a 80%, #1e2527 88%, #233d42 100%); }
.taskbar input { width: 215px; height: 39px; box-sizing: border-box; border: 1px solid #bbb; border-left: 0; background: #f1f1f1; padding: 0 0 0 3px; font: inherit; font-size: 14px; color: #444; border-radius: 0; }
.apps { display: flex; }
.apps button { width: 48px; display: flex; align-items: center; justify-content: center; background-repeat: no-repeat; }
.apps svg, .tray svg { width: 24px; height: 24px; display: block; }
.apps .open { background-image: linear-gradient(#76b9ed, #76b9ed); background-size: 40px 2px; background-position: bottom center; }
.apps .front { background-color: #6b5550; background-size: 100% 2px; }
.tray { margin-left: auto; display: flex; align-items: center; color: #e8e8e8; font-size: 14px; }
.tray .help { margin-right: 24px; }
.tray .weather { display: flex; align-items: center; gap: 7px; margin-right: 10px; }
.tray .weather + button ~ button { margin-left: -1px; }
</style>
